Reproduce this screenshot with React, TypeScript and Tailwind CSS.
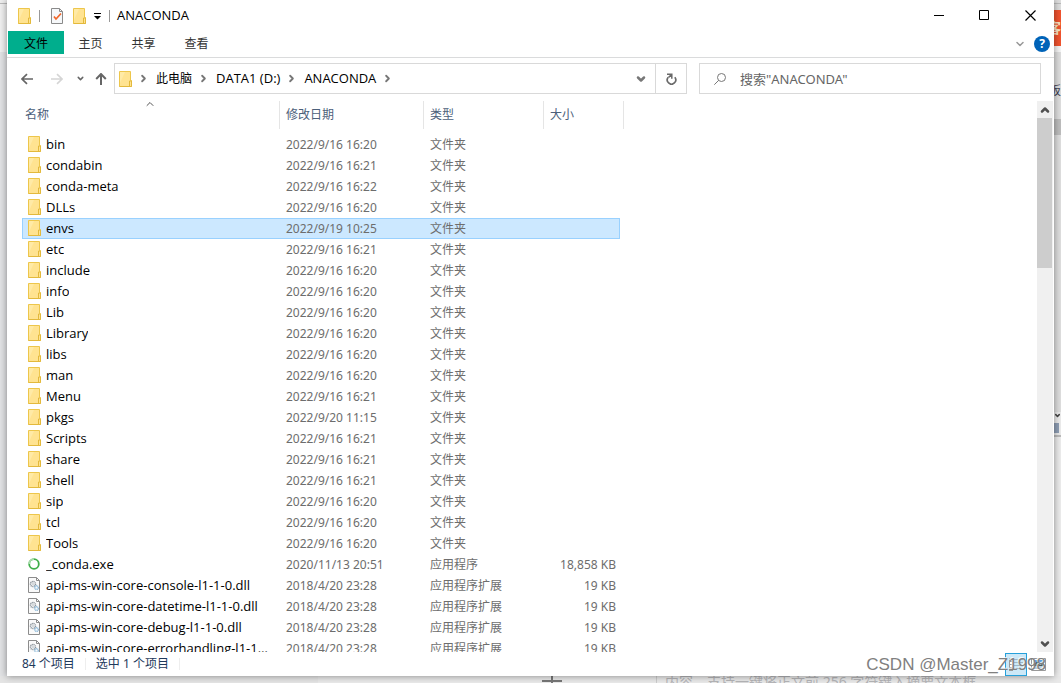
import { useState } from "react";
import { ChevronDown, ChevronRight, ChevronUp } from "lucide-react";
import clsx from "clsx";

type Kind = "folder" | "exe" | "dll";
type Entry = { name: string; date: string; kind: Kind; size?: string };

const typeNames = { folder: "文件夹", exe: "应用程序", dll: "应用程序扩展" };

const entries: Entry[] = [
  { name: "bin", date: "2022/9/16 16:20", kind: "folder" },
  { name: "condabin", date: "2022/9/16 16:21", kind: "folder" },
  { name: "conda-meta", date: "2022/9/16 16:22", kind: "folder" },
  { name: "DLLs", date: "2022/9/16 16:20", kind: "folder" },
  { name: "envs", date: "2022/9/19 10:25", kind: "folder" },
  { name: "etc", date: "2022/9/16 16:21", kind: "folder" },
  { name: "include", date: "2022/9/16 16:20", kind: "folder" },
  { name: "info", date: "2022/9/16 16:20", kind: "folder" },
  { name: "Lib", date: "2022/9/16 16:20", kind: "folder" },
  { name: "Library", date: "2022/9/16 16:20", kind: "folder" },
  { name: "libs", date: "2022/9/16 16:20", kind: "folder" },
  { name: "man", date: "2022/9/16 16:20", kind: "folder" },
  { name: "Menu", date: "2022/9/16 16:21", kind: "folder" },
  { name: "pkgs", date: "2022/9/20 11:15", kind: "folder" },
  { name: "Scripts", date: "2022/9/16 16:21", kind: "folder" },
  { name: "share", date: "2022/9/16 16:21", kind: "folder" },
  { name: "shell", date: "2022/9/16 16:21", kind: "folder" },
  { name: "sip", date: "2022/9/16 16:20", kind: "folder" },
  { name: "tcl", date: "2022/9/16 16:20", kind: "folder" },
  { name: "Tools", date: "2022/9/16 16:20", kind: "folder" },
  { name: "_conda.exe", date: "2020/11/13 20:51", kind: "exe", size: "18,858 KB" },
  { name: "api-ms-win-core-console-l1-1-0.dll", date: "2018/4/20 23:28", kind: "dll", size: "19 KB" },
  { name: "api-ms-win-core-datetime-l1-1-0.dll", date: "2018/4/20 23:28", kind: "dll", size: "19 KB" },
  { name: "api-ms-win-core-debug-l1-1-0.dll", date: "2018/4/20 23:28", kind: "dll", size: "19 KB" },
  { name: "api-ms-win-core-errorhandling-l1-1-0.dll", date: "2018/4/20 23:28", kind: "dll", size: "19 KB" },
];

function FolderIcon() {
  return (
    <svg className="h-4 w-[13px] shrink-0" viewBox="0 0 13 16" aria-hidden="true">
      <path d="M.5.5h11v9h1v6H.5z" fill="#ffe391" stroke="#edc64b" />
      <path d="M1 1h5L1 12z" fill="#ffeaa6" />
      <path d="M10.500 15V10h2v5.500H.5" fill="#ffe391" stroke="#e3b93c" />
    </svg>
  );
}

function ExeIcon() {
  return (
    <svg className="h-4 w-[13px] shrink-0" viewBox="0 0 13 16" fill="none" aria-hidden="true">
      <circle cx="6" cy="8" r="4.800" stroke="#3fae49" strokeWidth="1.800" />
      <path d="M6 3.200A4.800 4.800 0 0 0 1.200 8" stroke="#a9dcad" strokeWidth="1.800" />
    </svg>
  );
}

function DllIcon() {
  return (
    <svg className="h-4 w-[13px] shrink-0" viewBox="0 0 13 16" fill="none" aria-hidden="true">
      <path d="M.5.5h8l3 3v12H.5z" fill="#fafafa" stroke="#8c8c8c" />
      <path d="M8.500.5v3h3" stroke="#8c8c8c" />
      <circle cx="5" cy="7" r="2.500" stroke="#8f979e" strokeWidth="1.500" strokeDasharray="1.200 .5" />
      <circle cx="5" cy="7" r="1" fill="#c9ced2" />
      <circle cx="8.500" cy="10.500" r="1.800" stroke="#8db9d8" strokeWidth="1.500" strokeDasharray="1 .4" />
    </svg>
  );
}

function EntryIcon({ kind }: { kind: Kind }) {
  if (kind === "exe") return <ExeIcon />;
  if (kind === "dll") return <DllIcon />;
  return <FolderIcon />;
}

function TitleBar() {
  return (
    <header className="flex h-[31px] shrink-0 items-center pl-[11px] text-black">
      <FolderIcon />
      <span className="ml-2 h-3 w-px bg-[#999]" />
      <button aria-label="属性" className="ml-[11px]">
        <svg className="h-4 w-3" viewBox="0 0 12 16" fill="none">
          <path d="M.5.5h8l3 3v12H.5z" fill="#f6f8fa" stroke="#8a8a8a" />
          <path d="M8.500.5v3h3" stroke="#8a8a8a" />
          <path d="M3 8.500 5 11l5-5.500" stroke="#f1662a" strokeWidth="1.700" />
        </svg>
      </button>
      <button aria-label="新建文件夹" className="ml-[10px]"><FolderIcon /></button>
      <button aria-label="自定义快速访问工具栏" className="ml-2">
        <svg className="h-2 w-[7px]" viewBox="0 0 7 8">
          <path d="M0 1h7v1H0zM0 4h7L3.500 7.500z" fill="#000" />
        </svg>
      </button>
      <span className="ml-2 h-3 w-px bg-[#999]" />
      <h1 className="ml-[7px] flex-1 font-['Open_Sans','Noto_Sans_CJK_SC',sans-serif] text-[13px]">ANACONDA</h1>
      <div className="flex pr-px">
        <button aria-label="最小化" className="grid h-[30px] w-[45px] place-items-center">
          <svg className="size-[11px]" viewBox="0 0 11 11"><path d="M0 5.500h10" stroke="#000" /></svg>
        </button>
        <button aria-label="最大化" className="grid h-[30px] w-[45px] place-items-center">
          <svg className="size-[11px]" viewBox="0 0 11 11" fill="none"><path d="M.5.5h9v9h-9z" stroke="#000" /></svg>
        </button>
        <button aria-label="关闭" className="grid h-[30px] w-[46px] place-items-center">
          <svg className="size-[11px]" viewBox="0 0 11 11"><path d="m.5.5 10 10m0-10-10 10" stroke="#000" strokeWidth="1.200" /></svg>
        </button>
      </div>
    </header>
  );
}

function Ribbon() {
  return (
    <nav className="flex h-[27px] shrink-0 items-start border-b border-[#dadbdc] pl-px text-xs text-[#333]">
      <button className="h-[23px] w-14 bg-[#00ae8d] pt-0.5 text-black">文件</button>
      <button className="h-[23px] w-[53px] pt-0.5">主页</button>
      <button className="h-[23px] w-[53px] pt-0.5">共享</button>
      <button className="h-[23px] w-[53px] pt-0.5">查看</button>
      <div className="ml-auto flex items-center gap-2 pt-[5px] pr-1">
        <button aria-label="展开功能区">
          <ChevronDown className="size-3 text-[#999]" strokeWidth={3} />
        </button>
        <button aria-label="帮助" className="size-4 rounded-full bg-[#0063b8] text-xs leading-4 font-bold text-white">
          ?
        </button>
      </div>
    </nav>
  );
}

function AddressRow() {
  return (
    <div className="flex h-[41px] shrink-0 items-center pr-[13px] pl-[14px] text-[#666]">
      <button aria-label="后退">
        <svg className="size-3" viewBox="0 0 12 12" fill="none">
          <path d="M12 6H1m5-4.800L1 6l5 4.800" stroke="#666" strokeWidth="1.700" />
        </svg>
      </button>
      <button aria-label="前进" className="ml-[18px]">
        <svg className="size-3" viewBox="0 0 12 12" fill="none">
          <path d="M0 6h11M6 1.200 11 6l-5 4.800" stroke="#d5d5d5" strokeWidth="1.600" />
        </svg>
      </button>
      <button aria-label="最近浏览的位置" className="ml-[13px]">
        <ChevronDown className="size-[9px]" strokeWidth={4} />
      </button>
      <button aria-label="上移" className="ml-[10px]">
        <svg className="size-3" viewBox="0 0 12 12" fill="none">
          <path d="M6 12V1M1.200 6 6 1l4.800 5" stroke="#666" strokeWidth="2" />
        </svg>
      </button>
      <div className="ml-[7px] flex h-[31px] flex-1 items-center border border-[#d9d9d9] pl-1 font-['Open_Sans','Noto_Sans_CJK_SC',sans-serif] text-[13px] text-black">
        <FolderIcon />
        <Crumb>
          <span className="text-xs">此电脑</span>
        </Crumb>
        <Crumb>DATA1 (D:)</Crumb>
        <Crumb>ANACONDA</Crumb>
        <ChevronRight className="ml-1.5 size-[11px] text-[#777]" strokeWidth={4} />
        <button aria-label="以前的位置" className="mr-2 ml-auto">
          <ChevronDown className="size-3 text-[#777]" strokeWidth={5} />
        </button>
        <button aria-label="刷新" className="grid h-[29px] w-[31px] place-items-center border-l border-[#d9d9d9]">
          <svg className="h-3 w-[11px]" viewBox="0 0 11 12" fill="none">
            <path d="M8.800 4.300A4.200 4.200 0 1 1 2.200 4.300" stroke="#6a6a6a" strokeWidth="1.700" />
            <path d="M1 1.200h4.800v4.600M5.500 1.400 2.500 4.600" stroke="#6a6a6a" strokeWidth="1.500" />
          </svg>
        </button>
      </div>
      <div className="ml-3 flex h-[31px] w-[342px] items-center border border-[#d9d9d9] pl-[14px]">
        <svg className="size-3" viewBox="0 0 12 12" fill="none" aria-hidden="true">
          <circle cx="7.500" cy="4.500" r="4" stroke="#777" />
          <path d="M4.700 7.300.3 11.700" stroke="#777" />
        </svg>
        <input
          type="text"
          aria-label="搜索"
          placeholder={'搜索"ANACONDA"'}
          className="ml-[14px] h-7 min-w-0 flex-1 font-['Noto_Sans','Noto_Sans_CJK_SC',sans-serif] text-[13px] outline-none placeholder:text-[#666]"
        />
      </div>
    </div>
  );
}

function Crumb({ children }: { children: React.ReactNode }) {
  return (
    <>
      <ChevronRight className="ml-[6px] size-[11px] text-[#777]" strokeWidth={4} />
      <button className="ml-[7px]">{children}</button>
    </>
  );
}

function FileTable() {
  const [selected, setSelected] = useState("envs");

  return (
    <table className="ml-[15px] w-[602px] table-fixed border-separate border-spacing-0 text-left text-xs text-[#6d6d6d]">
      <colgroup>
        <col className="w-[258px]" />
        <col className="w-[144px]" />
        <col className="w-[120px]" />
        <col className="w-[76px]" />
        <col className="w-1" />
      </colgroup>
      <thead className="text-[#4c607a]">
        <tr className="h-[33px] align-top">
          <th className="relative p-0 font-normal">
            <ChevronUp className="absolute -top-[3px] left-[122px] size-3 text-[#555]" strokeWidth={2} />
            <div className="h-7 border-r border-[#e5e5e5] pl-[3px] leading-7">名称</div>
          </th>
          <th className="p-0 font-normal">
            <div className="h-7 border-r border-[#e5e5e5] pl-1.5 leading-7">修改日期</div>
          </th>
          <th className="p-0 font-normal">
            <div className="h-7 border-r border-[#e5e5e5] pl-1.5 leading-7">类型</div>
          </th>
          <th colSpan={2} className="p-0 font-normal">
            <div className="h-7 border-r border-[#e5e5e5] pl-1.5 leading-7">大小</div>
          </th>
        </tr>
      </thead>
      <tbody>
        {entries.map((e) => {
          const cell = clsx(
            "h-[21px] border-y p-0 leading-[19px]",
            e.name === selected ? "border-[#99d1ff] bg-[#cce8ff]" : "border-transparent",
          );
          return (
            <tr key={e.name} onClick={() => setSelected(e.name)} aria-selected={e.name === selected}>
              <td className={clsx(cell, "border-l pl-[5px]")}>
                <div className="flex h-[19px] items-center gap-[5px] pr-2 font-['Open_Sans','Noto_Sans_CJK_SC',sans-serif] text-[13px] text-black">
                  <span className="h-[17px] shrink-0">
                    <EntryIcon kind={e.kind} />
                  </span>
                  <span className="truncate leading-[19px]">{e.name}</span>
                </div>
              </td>
              <td className={clsx(cell, "pl-1.5")}>{e.date}</td>
              <td className={clsx(cell, "pl-1.5")}>{typeNames[e.kind]}</td>
              <td className={clsx(cell, "border-r pr-[3px] text-right")}>{e.size}</td>
              <td />
            </tr>
          );
        })}
      </tbody>
    </table>
  );
}

function Scrollbar() {
  return (
    <div className="mr-px flex w-4 shrink-0 flex-col bg-[#f0f0f0] text-[#505050]">
      <button aria-label="向上滚动" className="grid h-[17px] w-[15px] place-items-center">
        <ChevronUp className="size-3" strokeWidth={5} />
      </button>
      <div className="flex-1">
        <div className="h-[29%] w-[15px] bg-[#cdcdcd]" />
      </div>
      <button aria-label="向下滚动" className="grid h-[17px] w-[15px] place-items-center">
        <ChevronDown className="size-3" strokeWidth={5} />
      </button>
    </div>
  );
}

function StatusBar() {
  return (
    <footer className="relative flex h-6 shrink-0 items-center pr-2 pl-[15px] text-xs text-[#1e395b]">
      <span>84 个项目</span>
      <span className="mx-[10px] h-3 w-px bg-[#eee]" />
      <span>选中 1 个项目</span>
      <span className="ml-[10px] h-3 w-px bg-[#eee]" />
      <button aria-label="详细信息" className="ml-auto grid h-[23px] w-[22px] place-items-center border border-[#26a0da] bg-[#cce8f7]">
        <svg className="h-[13px] w-[14px]" viewBox="0 0 14 13">
          <path d="M0 0h4v13H0z" fill="#999" />
          <path d="M1 1h2v2H1zM1 4h2v2H1zM1 7h2v2H1zM1 10h2v2H1z" fill="#fff" />
          <path d="M5 1.500h9M5 4.500h9M5 7.500h9M5 10.500h9" stroke="#a3b7c5" />
        </svg>
      </button>
      <button aria-label="大缩略图" className="ml-1">
        <svg className="h-[13px] w-[15px]" viewBox="0 0 15 13">
          <path d="M.5.5h14v12H.5z" fill="#fff" stroke="#999" />
          <path d="M2 2h11v4H2z" fill="#5b9fe0" />
          <path d="M2 6 6 4l3 3 4-2v3H2z" fill="#4b5b57" />
          <path d="M2 8h11v3H2z" fill="#b9cfdf" />
        </svg>
      </button>
      <span className="pointer-events-none absolute right-2 -bottom-px font-['Liberation_Sans',sans-serif] text-[17px] leading-6 text-[#808080] [text-shadow:-1px_-1px_0_#ffffffcc]">
        CSDN @Master_Z1998
      </span>
    </footer>
  );
}

export default function App() {
  return (
    <div className="flex h-screen flex-col overflow-hidden bg-[#e1e2e4] font-['Noto_Sans','Noto_Sans_CJK_SC',sans-serif]">
      <div className="flex min-h-0 flex-1">
        <div className="w-[7px] shrink-0 bg-[#e1e2e4]">
          <div className="h-1 border-b border-[#bbb] bg-[#eee]" />
          <div className="h-12 bg-[#efefef]" />
        </div>
        <main className="relative z-10 flex min-w-0 flex-1 flex-col bg-white shadow-[0_0_7px_#00000070]">
          <TitleBar />
          <Ribbon />
          <AddressRow />
          <div className="flex min-h-0 flex-1 pt-[2px]">
            <div className="min-w-0 flex-1 overflow-hidden">
              <FileTable />
            </div>
            <Scrollbar />
          </div>
          <StatusBar />
        </main>
        <div className="flex w-[7px] shrink-0 flex-col overflow-hidden bg-[#dedede]">
          <div className="h-1 border-b border-[#bbb]" />
          <div className="mt-[6px] flex h-9 items-center justify-end bg-[#f0532f] text-sm font-bold text-[#fbe3c4]">客</div>
          <div className="h-[6px] bg-[#f5f5f5]" />
          <div className="mt-7 flex h-[22px] items-center justify-end text-xs text-[#445]">板</div>
          <div className="mt-[17px] h-4 bg-[#bdbdbd]" />
          <div className="mt-auto h-[264px] bg-[#ececec]">
            <ChevronDown className="size-[7px] text-[#444]" strokeWidth={5} />
            <div className="h-[18px] border-b-2 border-[#bbb] pt-1">
              <div className="h-[10px] w-[5px] bg-[#8f9fb5]" />
            </div>
          </div>
        </div>
      </div>
      <div className="relative flex h-[7px] shrink-0 items-start overflow-hidden bg-[#e4e4e4]">
        <div className="w-[318px] shrink-0" />
        <div className="flex h-full flex-1 bg-[#e9e9e9]">
          <svg className="ml-[224px] h-[7px] w-5 shrink-0" viewBox="0 0 20 7">
            <path d="M0 5h20M10 0v7" stroke="#777" strokeWidth="2" />
          </svg>
          <div className="ml-[94px] h-full w-px bg-[#ccc]" />
          <p className="ml-2 text-sm leading-[12px] whitespace-nowrap text-[#b5b5b8]">内容，支持一键将正文前 256 字符键入摘要文本框</p>
        </div>
      </div>
    </div>
  );
}
